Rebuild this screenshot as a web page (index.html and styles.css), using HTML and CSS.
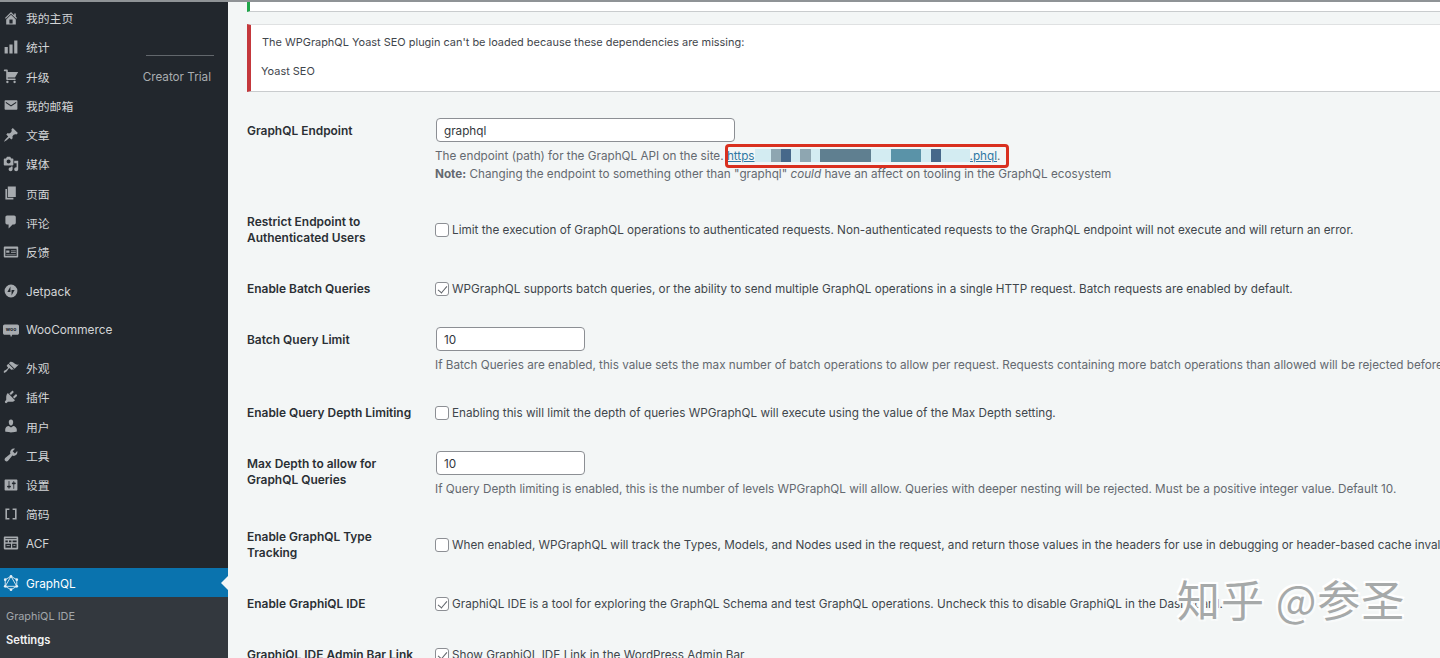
FILE: index.html
```html
<!DOCTYPE html>
<html lang="zh-CN">
<head>
<meta charset="utf-8">
<title>GraphQL Settings</title>
<link rel="stylesheet" href="styles.css">
</head>
<body>
<div class="topline"></div>
<div class="shell">
  <nav class="sidebar">
    <a class="item"><svg class="ico" viewBox="0 0 20 20"><path d="M16 8.5l1.53 1.53-1.06 1.06L10 4.62l-6.47 6.47-1.06-1.06L10 2.5l4 4v-2h2v4zm-6-2.46l6 5.99V18H4v-5.97zM12 17v-5H8v5h4z"/></svg><span>我的主页</span></a>
    <a class="item"><svg class="ico" viewBox="0 0 20 20"><path d="M18 18V2h-4v16h4zm-6 0V7H8v11h4zm-6 0v-8H2v8h4z"/></svg><span>统计</span><i class="blurline"></i></a>
    <a class="item"><svg class="ico" viewBox="0 0 20 20"><path d="M6 13h9c.55 0 1 .45 1 1s-.45 1-1 1H5c-.55 0-1-.45-1-1V4H2c-.55 0-1-.45-1-1s.45-1 1-1h3c.55 0 1 .45 1 1v2h13l-4 7H6v1zm-.5 3c.83 0 1.5.67 1.5 1.5S6.33 19 5.5 19 4 18.33 4 17.5 4.67 16 5.5 16zm9 0c.83 0 1.5.67 1.5 1.5s-.67 1.5-1.5 1.5-1.5-.67-1.5-1.5.67-1.5 1.5-1.5z"/></svg><span>升级</span><span class="plan">Creator Trial</span></a>
    <a class="item"><svg class="ico" viewBox="0 0 20 20"><path fill-rule="evenodd" d="M3 4h14c.55 0 1 .45 1 1v10c0 .55-.45 1-1 1H3c-.55 0-1-.45-1-1V5c0-.55.45-1 1-1zm13.5 1.800L10 10.200 3.500 5.800V7.600L10 12l6.500-4.400z"/></svg><span>我的邮箱</span></a>
    <a class="item"><svg class="ico" viewBox="0 0 20 20"><path d="M10.44 3.020l1.820-1.820 6.360 6.350-1.830 1.820c-1.050-.68-2.480-.57-3.410.36l-.75.75c-.92.93-1.040 2.350-.35 3.410l-1.830 1.820-2.410-2.410-2.800 2.790c-.42.42-3.380 2.710-3.800 2.290s1.860-3.390 2.280-3.810l2.790-2.790L4.100 9.360l1.830-1.820c1.050.69 2.480.57 3.400-.36l.75-.75c.93-.92 1.050-2.350.36-3.410z"/></svg><span>文章</span></a>
    <a class="item"><svg class="ico" viewBox="0 0 20 20"><path d="M13 11V4c0-.55-.45-1-1-1h-1.670L9 1H5L3.670 3H2c-.55 0-1 .45-1 1v7c0 .55.45 1 1 1h10c.55 0 1-.45 1-1zM7 4.500c1.380 0 2.500 1.120 2.500 2.500S8.380 9.500 7 9.500 4.500 8.380 4.500 7 5.620 4.500 7 4.500zM14 6h5v10.500c0 1.380-1.120 2.500-2.500 2.500S14 17.880 14 16.500s1.120-2.500 2.500-2.500c.17 0 .34.020.5.050V9h-3V6zm-4 8.050V13h2v3.500c0 1.380-1.120 2.500-2.500 2.500S7 17.880 7 16.500 8.120 14 9.500 14c.17 0 .34.020.5.050z"/></svg><span>媒体</span></a>
    <a class="item"><svg class="ico" viewBox="0 0 20 20"><path d="M6 15V2h10v13H6zm-1 1h8v2H3V5h2v11z"/></svg><span>页面</span></a>
    <a class="item"><svg class="ico" viewBox="0 0 20 20"><path d="M5 2h9c1.100 0 2 .9 2 2v7c0 1.100-.9 2-2 2h-2l-5 5v-5H5c-1.100 0-2-.9-2-2V4c0-1.100.9-2 2-2z"/></svg><span>评论</span></a>
    <a class="item"><svg class="ico" viewBox="0 0 20 20"><path fill-rule="evenodd" d="M2 3h16c.55 0 1 .45 1 1v12c0 .55-.45 1-1 1H2c-.55 0-1-.45-1-1V4c0-.55.45-1 1-1zm1 3v9h14V6H3zm1 2h4v3H4V8zm6 0h6v1h-6V8zm0 2h6v1h-6v-1zm-6 3h12v1H4v-1z"/></svg><span>反馈</span></a>

    <a class="item gap-jet"><svg class="ico" viewBox="0 0 20 20"><path fill-rule="evenodd" d="M10 2a8 8 0 1 1 0 16 8 8 0 0 1 0-16zM9.300 4.500L5.500 11.300h3.800zM10.700 8.700v6.800l3.800-6.800z"/></svg><span class="latin">Jetpack</span></a>
    <a class="item gap"><svg class="ico" viewBox="0 0 20 20"><path d="M2 3h16c1 0 2 1 2 2v9c0 1-1 2-2 2h-6.500l-1.500 3-1-3H2c-1 0-2-1-2-2V5c0-1 1-2 2-2z"/><text class="wootext" x="10" y="11.500" text-anchor="middle">woo</text></svg><span>WooCommerce</span></a>

    <a class="item gap-look"><svg class="ico" viewBox="0 0 20 20"><path d="M14.480 11.060L7.410 3.990l1.500-1.500c.5-.56 2.300-.47 3.510.32 1.210.8 1.430 1.280 2.910 2.100 1.180.64 2.450 1.260 4.450.85zm-.71.71L6.700 4.700 4.930 6.470c-.39.39-.39 1.020 0 1.410l1.060 1.060c.39.39.39 1.030 0 1.420-.6.6-1.430 1.110-2.210 1.690-.35.26-.7.53-1.010.84C1.430 13.230.4 14.890 1.100 15.590c.7.7 2.360-.33 3.700-1.670.31-.31.58-.66.85-1.010.58-.78 1.090-1.610 1.690-2.210.39-.39 1.020-.39 1.410 0l1.060 1.060c.39.39 1.020.39 1.410 0z"/></svg><span>外观</span></a>
    <a class="item"><svg class="ico" viewBox="0 0 20 20"><path d="M13.110 4.360L9.870 7.600 8 5.730l3.240-3.240c.35-.34 1.050-.2 1.560.32.52.51.66 1.210.31 1.550zm-8 1.770l.91-1.120 9.010 9.010-1.190.84c-.71.71-2.630 1.160-3.820 1.160H6.140L4.900 17.260c-.59.59-1.540.59-2.120 0-.59-.58-.59-1.530 0-2.120l1.240-1.240v-3.880c0-1.130.4-3.190 1.090-3.890zm7.260 3.970l3.240-3.240c.34-.35 1.040-.21 1.550.31.52.51.66 1.210.31 1.550l-3.240 3.250z"/></svg><span>插件</span></a>
    <a class="item"><svg class="ico" viewBox="0 0 20 20"><path d="M10 9.250c-2.270 0-2.730-3.440-2.730-3.440C7 4.020 7.820 2 9.970 2c2.160 0 2.980 2.020 2.710 3.810 0 0-.41 3.440-2.680 3.440zm0 2.570L12.720 10c2.390 0 4.520 2.330 4.520 4.530v2.490s-3.650 1.130-7.240 1.130c-3.650 0-7.240-1.130-7.240-1.130v-2.490c0-2.250 1.940-4.480 4.470-4.480z"/></svg><span>用户</span></a>
    <a class="item"><svg class="ico" viewBox="0 0 20 20"><path d="M16.680 9.770c-1.340 1.340-3.300 1.670-4.950.99l-5.410 6.520c-.99.99-2.590.99-3.580 0s-.99-2.590 0-3.570l6.520-5.420c-.68-1.650-.35-3.610.99-4.950 1.280-1.280 3.120-1.620 4.720-1.060l-2.890 2.890 2.820 2.820 2.860-2.870c.53 1.580.18 3.390-1.080 4.650z"/></svg><span>工具</span></a>
    <a class="item"><svg class="ico" viewBox="0 0 20 20"><path fill-rule="evenodd" d="M18 16V4c0-.55-.45-1-1-1H3c-.55 0-1 .45-1 1v12c0 .55.45 1 1 1h14c.55 0 1-.45 1-1zM8 11h1c.55 0 1 .45 1 1s-.45 1-1 1H8v1.500c0 .28-.22.5-.5.5s-.5-.22-.5-.5V13H6c-.55 0-1-.45-1-1s.45-1 1-1h1V5.500c0-.28.22-.5.5-.5s.5.22.5.5V11zm5-2h-1c-.55 0-1-.45-1-1s.45-1 1-1h1V5.500c0-.28.22-.5.5-.5s.5.22.5.500V7h1c.55 0 1 .45 1 1s-.45 1-1 1h-1v5.500c0 .28-.22.5-.5.5s-.5-.22-.5-.5V9z"/></svg><span>设置</span></a>
    <a class="item"><svg class="ico" viewBox="0 0 20 20"><path d="M8 3H3v14h5v-2H5V5h3zM12 3h5v14h-5v-2h3V5h-3z"/></svg><span>简码</span></a>
    <a class="item"><svg class="ico" viewBox="0 0 20 20"><path fill-rule="evenodd" d="M2 2h16c.55 0 1 .45 1 1v14c0 .55-.45 1-1 1H2c-.55 0-1-.45-1-1V3c0-.55.45-1 1-1zm1 2v1h14V4H3zm0 3v2h3V7H3zm4.500 0v2h3V7h-3zm4.500 0v2h5V7h-5zM3 11v5h7v-5H3zm8.500 0v5H17v-5h-5.500zM4.500 12.500h4v1h-4zm8.500 0h2.500v1H13z"/></svg><span class="latin">ACF</span></a>

    <a class="item gap-ql active"><svg class="ico" viewBox="2 1 16 18"><path class="ql-line" d="M10 2.500L16.500 6.250V13.750L10 17.500 3.500 13.750V6.250zM10 2.500L16.500 13.750H3.500z"/><circle cx="10" cy="2.500" r="1.500"/><circle cx="16.500" cy="6.250" r="1.500"/><circle cx="16.500" cy="13.750" r="1.500"/><circle cx="10" cy="17.500" r="1.500"/><circle cx="3.500" cy="13.750" r="1.500"/><circle cx="3.500" cy="6.250" r="1.500"/></svg><span class="latin">GraphQL</span></a>
    <div class="submenu">
      <a class="subitem">GraphiQL IDE</a>
      <a class="subitem current">Settings</a>
    </div>
  </nav>

  <main class="content">
    <div class="notice notice-ok"></div>
    <div class="notice notice-err">
      <p class="err-title">The WPGraphQL Yoast SEO plugin can't be loaded because these dependencies are missing:</p>
      <p class="err-item">Yoast SEO</p>
    </div>

    <section class="form">
      <div class="row">
        <div class="label">GraphQL Endpoint</div>
        <div class="field">
          <input class="input input-wide" type="text" value="graphql">
          <p class="desc first">The endpoint (path) for the GraphQL API on the site. <span class="marked"><a class="link">https<span class="mask"></span>.phql</a>.</span></p>
          <p class="desc"><strong>Note:</strong> Changing the endpoint to something other than "graphql" <em>could</em> have an affect on tooling in the GraphQL ecosystem</p>
        </div>
      </div>
      <div class="row check tall">
        <div class="label">Restrict Endpoint to<br>Authenticated Users</div>
        <label class="field opt"><span class="cb"></span>Limit the execution of GraphQL operations to authenticated requests. Non-authenticated requests to the GraphQL endpoint will not execute and will return an error.</label>
      </div>
      <div class="row check">
        <div class="label">Enable Batch Queries</div>
        <label class="field opt"><span class="cb on"></span>WPGraphQL supports batch queries, or the ability to send multiple GraphQL operations in a single HTTP request. Batch requests are enabled by default.</label>
      </div>
      <div class="row">
        <div class="label">Batch Query Limit</div>
        <div class="field">
          <input class="input input-num" type="text" value="10">
          <p class="desc first">If Batch Queries are enabled, this value sets the max number of batch operations to allow per request. Requests containing more batch operations than allowed will be rejected before they are executed.</p>
        </div>
      </div>
      <div class="row check">
        <div class="label">Enable Query Depth Limiting</div>
        <label class="field opt"><span class="cb"></span>Enabling this will limit the depth of queries WPGraphQL will execute using the value of the Max Depth setting.</label>
      </div>
      <div class="row">
        <div class="label">Max Depth to allow for<br>GraphQL Queries</div>
        <div class="field">
          <input class="input input-num" type="text" value="10">
          <p class="desc first">If Query Depth limiting is enabled, this is the number of levels WPGraphQL will allow. Queries with deeper nesting will be rejected. Must be a positive integer value. Default 10.</p>
        </div>
      </div>
      <div class="row check tall">
        <div class="label">Enable GraphQL Type<br>Tracking</div>
        <label class="field opt"><span class="cb"></span>When enabled, WPGraphQL will track the Types, Models, and Nodes used in the request, and return those values in the headers for use in debugging or header-based cache invalidation.</label>
      </div>
      <div class="row check tall">
        <div class="label">Enable GraphiQL IDE</div>
        <label class="field opt"><span class="cb on"></span>GraphiQL IDE is a tool for exploring the GraphQL Schema and test GraphQL operations. Uncheck this to disable GraphiQL in the Dashboard.</label>
      </div>
      <div class="row check">
        <div class="label">GraphiQL IDE Admin Bar Link</div>
        <label class="field opt"><span class="cb on"></span>Show GraphiQL IDE Link in the WordPress Admin Bar</label>
      </div>
    </section>
  </main>
</div>
<div class="watermark">知乎 @参圣</div>
</body>
</html>
```
FILE: styles.css
```css
* { box-sizing: border-box; }
html, body { margin: 0; height: 658px; overflow: hidden; }
body {
  font-family: Inter, "Liberation Sans", "Noto Sans CJK SC", sans-serif;
  font-size: 11.73px;
  background: #f3f6f6;
  color: #3f464c;
}
.topline { height: 2px; background: #8f9396; }
.shell { display: flex; height: 656px; }

/* sidebar */
.sidebar {
  flex: 0 0 228px;
  background: #22272d;
  padding-top: 1px;
  overflow: hidden;
  display: flex;
  flex-direction: column;
}
.item {
  position: relative;
  flex: 0 0 29.25px;
  display: flex;
  align-items: center;
  gap: 7px;
  padding: 0 17px 0 3px;
  color: #d3d5d7;
  font-size: 11.8px;
}
.gap { margin-top: 9.6px; }
.gap-jet { margin-top: 10.6px; }
.gap-look { margin-top: 8px; }
.gap-ql { margin-top: 10.2px; }
.latin { padding-top: 2px; }
.ico { width: 16px; height: 16px; flex: none; fill: #a7abaf; }
.wootext { fill: #22272d; font-size: 6.5px; font-weight: 700; }
.plan { margin-left: auto; padding-top: 2px; color: #a9adb0; font-size: 11.7px; }
.blurline {
  margin-left: auto;
  align-self: flex-end;
  margin-bottom: 6px;
  margin-right: -3px;
  width: 68px;
  height: 1px;
  background: #62676c;
  filter: blur(0.5px);
}
.active { background: #0a73ae; color: #fff; }
.active .ico { fill: #e6f0f6; }
.ql-line { fill: none; stroke: #e6f0f6; stroke-width: 1; }
.active::after {
  content: "";
  position: absolute;
  right: 0;
  top: 50%;
  margin-top: -7px;
  border: 7px solid transparent;
  border-left: 0;
  border-right-color: #f3f6f6;
}
.submenu {
  flex: 1;
  background: #33383e;
  padding: 10px 6px 0;
  display: flex;
  flex-direction: column;
  gap: 6px;
  font-size: 10.9px;
}
.subitem { line-height: 18px; color: #a2a6aa; }
.subitem.current { color: #f2f3f3; font-weight: 600; font-size: 11.2px; }

/* content */
.content { flex: 1; min-width: 0; padding-left: 19px; overflow: hidden; }
.notice {
  background: #fff;
  border-bottom: 1px solid #c9ccce;
}
.notice-ok { height: 10px; border-left: 3px solid #1fa64a; }
.notice-err {
  margin-top: 12px;
  height: 68px;
  border-left: 4px solid #c4383c;
  border-top: 1px solid #dfe1e2;
  padding: 9px 0 0 11px;
  color: #3f464c;
  font-size: 10.95px;
}
.notice-err p { margin: 0; line-height: 16px; }
.notice-err .err-item { margin: 13px 0 0 -1px; }

.form { padding-top: 26px; }
.row {
  display: flex;
  margin-bottom: 30px;
  width: 1500px;
}
.row:first-child { margin-bottom: 31px; }
.row:not(.check) { margin-bottom: 31px; }
.row.check { align-items: center; }
.row.tall { margin-bottom: 35px; }
.label {
  flex: 0 0 188px;
  padding-right: 8px;
  font-weight: 600;
  line-height: 16px;
  color: #2a2f34;
  font-size: 11.95px;
}
.row:not(.check) .label { padding-top: 5px; }
.field { flex: 1; min-width: 0; }
.opt { display: flex; align-items: center; white-space: nowrap; line-height: 16px; }
.input {
  display: block;
  height: 24px;
  margin-left: 1px;
  padding: 1px 7px 0;
  border: 1px solid #8c8f94;
  border-radius: 4px;
  background: #fff;
  font: inherit;
  color: #32373c;
}
.input-wide { width: 299px; }
.input-num { width: 149px; }
.desc { margin: 0; line-height: 18px; color: #646970; white-space: nowrap; }
.desc.first { margin-top: 5px; }
.marked { position: relative; }
.marked::after {
  content: "";
  position: absolute;
  left: -2px;
  right: -9px;
  top: -5px;
  bottom: -5px;
  border: 3px solid #d9301f;
  border-radius: 4px;
}
.link { color: #2f78a3; text-decoration: underline; }
.mask {
  display: inline-block;
  width: 215px;
  height: 13px;
  vertical-align: -2px;
  filter: blur(0.7px);
  background: linear-gradient(90deg,
    #d3ecf2 0 16px, #8ea6b1 16px 26px, #46688a 26px 36px, #d3ecf2 36px 45px,
    #8ea6b1 45px 56px, #d3ecf2 56px 65px, #5f7f90 65px 116px, #d3ecf2 116px 136px,
    #5a93a8 136px 166px, #d3ecf2 166px 176px, #46688a 176px 186px, #d3ecf2 186px 215px);
}
.cb {
  flex: none;
  width: 14px;
  height: 14px;
  margin-right: 3px;
  border: 1px solid #8c8f94;
  border-radius: 3px;
  background: #fff;
  position: relative;
}
.cb.on::after {
  content: "";
  position: absolute;
  left: 4px;
  top: 1px;
  width: 4px;
  height: 8px;
  border: solid #5d6267;
  border-width: 0 1.5px 1.5px 0;
  transform: rotate(40deg);
}
.watermark {
  position: absolute;
  left: 1177px;
  top: 570px;
  font-family: "Noto Sans CJK SC", sans-serif;
  font-size: 43px;
  line-height: 56px;
  letter-spacing: 1px;
  white-space: nowrap;
  color: #a6a9a9;
  text-shadow: -2px -2px 0 #fff, 2px -2px 0 #fff, -2px 2px 0 #f8fafa, 2px 2px 0 #f8fafa, 0 0 4px #fff;
}
```
